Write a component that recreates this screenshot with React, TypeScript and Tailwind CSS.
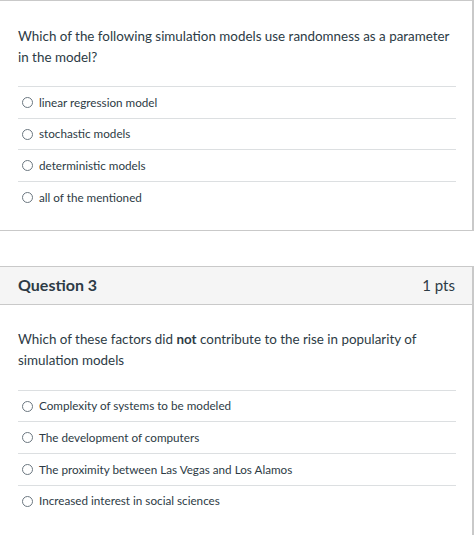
import React from 'react';

type Question = {
  id: number;
  title?: string;
  points?: string;
  text: React.ReactNode;
  answers: string[];
};

const questions: Question[] = [
  {
    id: 2,
    text: 'Which of the following simulation models use randomness as a parameter in the model?',
    answers: ['linear regression model', 'stochastic models', 'deterministic models', 'all of the mentioned'],
  },
  {
    id: 3,
    title: 'Question 3',
    points: '1 pts',
    text: (
      <>
        Which of these factors did <strong className="font-bold">not</strong> contribute to the rise in popularity of
        simulation models
      </>
    ),
    answers: [
      'Complexity of systems to be modeled',
      'The development of computers',
      'The proximity between Las Vegas and Los Alamos',
      'Increased interest in social sciences',
    ],
  },
];

const Radio = () => (
  <span className="w-[11px] h-[11px] rounded-full border border-[#6b7780] bg-white shrink-0" />
);

const QuestionCard = ({ q }: { q: Question }) => (
  <div className="border-y border-r-2 border-[#c9c9c9] bg-white">
    {q.title && (
      <div className="flex items-center justify-between h-[38px] pl-[20px] pr-[17px] bg-[#f5f5f5] border-b border-[#c9c9c9]">
        <h2 className="text-[16px] font-bold text-[#2d3b45]">{q.title}</h2>
        <span className="text-[15px] text-[#2d3b45]">{q.points}</span>
      </div>
    )}
    <div className={q.title ? 'pl-[20px] pr-4 pt-[24px] pb-[33px]' : 'pl-[20px] pr-4 pt-[25px] pb-[17px]'}>
      <p className="text-[13.4px] leading-[21px] text-[#2d3b45]">{q.text}</p>
      <div className={q.title ? 'mt-[19px]' : 'mt-[18px]'}>
        {q.answers.map(a => (
          <div key={a} className="flex items-center gap-[6px] h-[31.7px] pl-1 border-t border-[#dcdfe1]">
            <Radio />
            <span className="text-[11.7px] text-[#2d3b45]">{a}</span>
          </div>
        ))}
      </div>
    </div>
  </div>
);

export default function App() {
  return (
    <div className="w-[474px] h-[535px] overflow-hidden bg-white" style={{ fontFamily: 'Lato, "Open Sans", sans-serif' }}>
      <div className="ml-[-2px] w-[476px] flex flex-col gap-[35px]">
        {questions.map(q => (
          <QuestionCard key={q.id} q={q} />
        ))}
      </div>
    </div>
  );
}
